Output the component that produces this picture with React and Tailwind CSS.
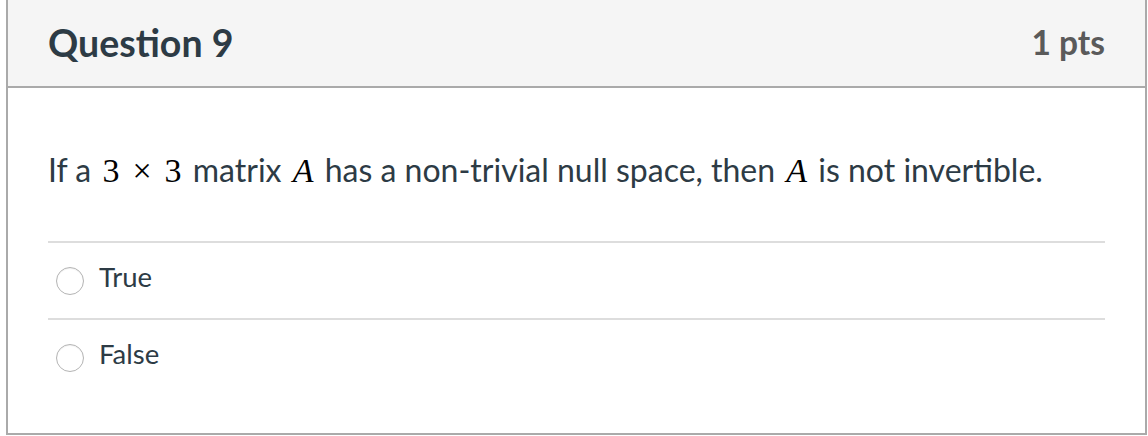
import React from 'react';

const M = ({ children, italic }) => (
    <span
        className={`inline-block leading-none text-[34px] text-black mx-[3px] ${italic ? 'italic' : ''}`}
        style={{ fontFamily: '"Liberation Serif", serif' }}
    >
        {children}
    </span>
);

const Answer = ({ label }) => (
    <div className="flex items-center h-[77px] border-t-2 border-[#dddddd]">
        <span className="ml-2 w-[28px] h-[28px] rounded-full border border-[#b4b4b4] bg-white shadow-[inset_0_1px_1px_rgba(0,0,0,0.06)] shrink-0" />
        <span className="ml-[15px] mb-2 text-[27.5px] leading-[36px] text-[#2d3b45]">{label}</span>
    </div>
);

export default function App() {
    return (
        <div className="bg-white w-[1148px] h-[436px]" style={{ fontFamily: 'Lato, "Noto Sans", sans-serif' }}>
            <div className="ml-[6px] w-[1141px] h-[435px] border-l-2 border-r-2 border-b-2 border-[#aaaaaa]">
                {/* header */}
                <div className="flex items-center justify-between h-[88px] px-10 bg-[#f5f5f5] border-b-2 border-[#aaaaaa]">
                    <h3 className="text-[37.5px] font-bold text-[#2d3b45] leading-none">Question 9</h3>
                    <span className="text-[33.5px] font-bold text-[#5a5a5a] leading-none">1 pts</span>
                </div>

                <div className="px-10 pt-[59px]">
                    <p className="text-[32px] leading-[45px] text-[#2d3b45] mb-[49px]">
                        If a <M>3</M>
                        <M><span className="px-[7px]">×</span></M>
                        <M>3</M> matrix <M italic>A</M> has a non-trivial null space, then <M italic>A</M> is not invertible.
                    </p>
                    <Answer label="True" />
                    <Answer label="False" />
                </div>
            </div>
        </div>
    );
}
